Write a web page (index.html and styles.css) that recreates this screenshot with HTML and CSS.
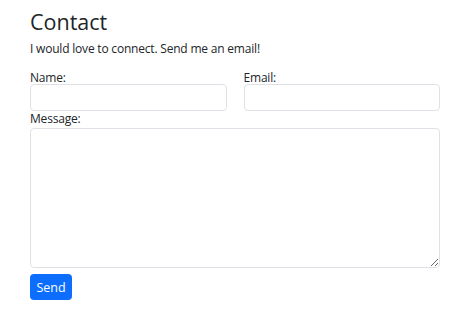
FILE: index.html
```html
<!DOCTYPE html>
<html lang="en">
<head>
<meta charset="utf-8">
<title>Contact</title>
<link rel="stylesheet" href="styles.css">
</head>
<body>
<main class="contact">
  <h1 class="title">Contact</h1>
  <p class="lead">I would love to connect. Send me an email!</p>
  <form class="form">
    <div class="row">
      <div class="field">
        <label class="label" for="name">Name:</label>
        <input class="control" id="name" type="text">
      </div>
      <div class="field">
        <label class="label" for="email">Email:</label>
        <input class="control" id="email" type="email">
      </div>
    </div>
    <div class="field">
      <label class="label" for="message">Message:</label>
      <textarea class="control area" id="message"></textarea>
    </div>
    <button class="btn" type="button">Send</button>
  </form>
</main>
</body>
</html>
```

FILE: styles.css
```css
html, body {
  margin: 0;
  padding: 0;
  background: #fff;
}
body {
  font-family: "Open Sans", "Noto Sans", sans-serif;
  color: #212529;
  font-size: 12px;
  letter-spacing: -0.2px;
}
.contact {
  width: 410px;
  padding: 9px 0 0 30px;
}
.title {
  margin: 0;
  font-size: 21.5px;
  font-weight: 400;
  letter-spacing: 0;
  line-height: 26px;
}
.lead {
  margin: 5px 0 14px;
  line-height: 18px;
}
.form {
  display: flex;
  flex-direction: column;
}
.row {
  display: grid;
  grid-template-columns: 1fr 1fr;
  column-gap: 17px;
}
.field {
  display: flex;
  flex-direction: column;
}
.label {
  line-height: 12px;
}
.control {
  box-sizing: border-box;
  height: 27px;
  border: 1px solid #dee2e6;
  border-radius: 4px;
  background: #fff;
  font: inherit;
  padding: 4px 8px;
  margin: 0 0 2px;
}
.area {
  height: 140px;
  resize: vertical;
  margin: 3px 0 6px;
}
.btn {
  align-self: flex-start;
  width: 42px;
  height: 26px;
  padding: 0;
  border: 0;
  border-radius: 4px;
  background: #0d6efd;
  color: #fff;
  font: inherit;
  font-size: 12.5px;
  letter-spacing: 0;
}
```
